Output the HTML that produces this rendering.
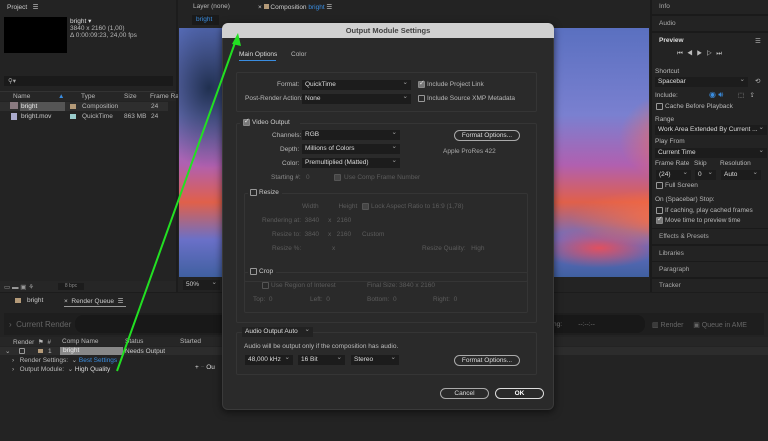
<!DOCTYPE html>
<html><head><meta charset="utf-8"><style>
*{margin:0;padding:0;box-sizing:border-box}
body{width:768px;height:441px;background:#1c1c1c;font-family:"Liberation Sans",sans-serif;font-size:6.5px;color:#b8b8b8;position:relative;overflow:hidden}
.a{position:absolute;white-space:nowrap}
.dd{position:absolute;background:#1c1c1c;color:#ddd;padding-left:3px;line-height:10px;height:10px}
.dd:after{content:"⌄";position:absolute;right:3px;top:-2px;color:#aaa}
.cb{position:absolute;width:7px;height:7px;border:1px solid #999;border-radius:1px}
.cb.on{background:#777;border-color:#888}
.cb.on:after{content:"✓";position:absolute;left:0;top:-3px;font-size:7px;color:#ddd}
.box{position:absolute;border:1px solid #353535;border-radius:2px}
.btn{position:absolute;border:1px solid #aaa;border-radius:6px;text-align:center;color:#ddd;line-height:9px}
.dim{color:#5c5c5c}
.rp{position:absolute;left:652px;width:116px;background:#232323;color:#aaa;padding-left:7px}
</style></head><body>
<!-- project panel -->
<div class="a" style="left:0;top:0;width:176px;height:292px;background:#232323"></div>
<div class="a" style="left:7px;top:3px;color:#ccc">Project &nbsp; ☰</div>
<div class="a" style="left:4px;top:17px;width:63px;height:36px;background:#000"></div>
<div class="a" style="left:70px;top:17px;color:#ddd">bright ▾</div>
<div class="a" style="left:70px;top:25px">3840 x 2160 (1,00)</div>
<div class="a" style="left:70px;top:32px">Δ 0:00:09:23, 24,00 fps</div>
<div class="a" style="left:4px;top:76px;width:169px;height:10px;background:#1a1a1a"></div>
<div class="a" style="left:8px;top:77px;color:#aaa">⚲▾</div>
<div class="a" style="left:0;top:91px;width:176px;height:10px;background:#262626;border-top:1px solid #333"></div>
<div class="a" style="left:13px;top:93px">Name</div><div class="a" style="left:58px;top:93px;color:#3a8de0">▲</div>
<div class="a" style="left:81px;top:93px">Type</div><div class="a" style="left:124px;top:93px">Size</div><div class="a" style="left:150px;top:93px">Frame Ra</div>
<div class="a" style="left:0;top:102px;width:168px;height:9px;background:#2e2e2e"></div>
<div class="a" style="left:20px;top:102px;width:45px;height:9px;background:#555"></div>
<div class="a" style="left:10px;top:102px;width:8px;height:7px;background:#8a7a80"></div>
<div class="a" style="left:21px;top:103px;color:#eee">bright</div>
<div class="a" style="left:70px;top:104px;width:6px;height:5px;background:#b49a78"></div>
<div class="a" style="left:82px;top:103px">Composition</div><div class="a" style="left:151px;top:103px">24</div>
<div class="a" style="left:11px;top:113px;width:6px;height:7px;background:#aac"></div>
<div class="a" style="left:21px;top:113px;color:#ccc">bright.mov</div>
<div class="a" style="left:70px;top:114px;width:6px;height:5px;background:#9cc"></div>
<div class="a" style="left:82px;top:113px">QuickTime</div><div class="a" style="left:124px;top:113px">863 MB</div><div class="a" style="left:151px;top:113px">24</div>
<div class="a" style="left:0;top:281px;width:176px;height:11px;background:#262626"></div>
<div class="a" style="left:4px;top:283px;color:#999">▭ ▬ ▣ ⚘</div>
<div class="a" style="left:58px;top:283px;width:26px;height:7px;background:#1c1c1c;color:#888;font-size:5px;text-align:center">8 bpc</div>
<!-- comp viewer -->
<div class="a" style="left:178px;top:0;width:472px;height:292px;background:#232323"></div>
<div class="a" style="left:193px;top:3px">Layer (none)</div>
<div class="a" style="left:258px;top:3px;color:#ccc">× <span style="display:inline-block;width:5px;height:5px;background:#b49a78"></span> Composition <span style="color:#3a8de0">bright</span> ☰</div>
<div class="a" style="left:192px;top:15px;width:27px;height:10px;background:#1a1a1a;color:#3a8de0;padding-left:4px;line-height:10px">bright</div>
<div class="a" style="left:179px;top:28px;width:470px;height:249px;background:
radial-gradient(ellipse 70px 50px at 510px 110px,#ff6a50,transparent),
radial-gradient(ellipse 110px 30px at 500px 190px,#ff7040,transparent),
radial-gradient(ellipse 60px 20px at 420px 220px,#e05060,transparent),
radial-gradient(ellipse 60px 80px at 30px 60px,#203050,transparent),
linear-gradient(180deg,#5a70c0 0%,#7a80d0 35%,#b060b0 55%,#e0604a 70%,#6a70c8 85%,#4060a0 100%)"></div>
<div class="a" style="left:178px;top:278px;width:472px;height:14px;background:#232323"></div>
<div class="dd" style="left:183px;top:280px;width:37px;color:#ccc">50%</div>
<!-- right panel -->
<div class="a" style="left:650px;top:0;width:118px;height:292px;background:#1a1a1a"></div>
<div class="rp" style="top:0;height:14px;line-height:14px">Info</div>
<div class="rp" style="top:16px;height:15px;line-height:15px">Audio</div>
<div class="rp" style="top:33px;height:195px"></div>
<div class="a" style="left:659px;top:37px;color:#ddd;font-weight:bold">Preview</div><div class="a" style="left:755px;top:37px">☰</div>
<div class="a" style="left:677px;top:50px;color:#bbb;letter-spacing:4px">⏮◀▶▷⏭</div>
<div class="a" style="left:655px;top:68px">Shortcut</div>
<div class="dd" style="left:655px;top:77px;width:93px">Spacebar</div>
<div class="a" style="left:755px;top:77px">⟲</div>
<div class="a" style="left:655px;top:92px">Include:</div>
<div class="a" style="left:709px;top:90px;color:#3a8de0;font-size:8px">◉ 🔊︎</div><div class="a" style="left:738px;top:91px">⬚ &nbsp; ⇪</div>
<div class="cb" style="left:656px;top:103px"></div><div class="a" style="left:665px;top:103px">Cache Before Playback</div>
<div class="a" style="left:655px;top:116px">Range</div>
<div class="dd" style="left:655px;top:125px;width:112px">Work Area Extended By Current ...</div>
<div class="a" style="left:655px;top:138px">Play From</div>
<div class="dd" style="left:655px;top:148px;width:112px">Current Time</div>
<div class="a" style="left:655px;top:160px">Frame Rate</div><div class="a" style="left:694px;top:160px">Skip</div><div class="a" style="left:720px;top:160px">Resolution</div>
<div class="dd" style="left:656px;top:170px;width:35px">(24)</div>
<div class="dd" style="left:695px;top:170px;width:21px">0</div>
<div class="dd" style="left:721px;top:170px;width:40px">Auto</div>
<div class="cb" style="left:656px;top:182px"></div><div class="a" style="left:665px;top:182px">Full Screen</div>
<div class="a" style="left:655px;top:196px">On (Spacebar) Stop:</div>
<div class="cb" style="left:656px;top:207px"></div><div class="a" style="left:665px;top:207px">If caching, play cached frames</div>
<div class="cb on" style="left:656px;top:217px"></div><div class="a" style="left:665px;top:217px">Move time to preview time</div>
<div class="rp" style="top:229px;height:15px;line-height:15px">Effects &amp; Presets</div>
<div class="rp" style="top:246px;height:15px;line-height:15px">Libraries</div>
<div class="rp" style="top:262px;height:15px;line-height:15px">Paragraph</div>
<div class="rp" style="top:279px;height:13px;line-height:13px">Tracker</div>
<!-- bottom -->
<div class="a" style="left:0;top:293px;width:768px;height:148px;background:#232323"></div>
<div class="a" style="left:15px;top:298px;width:6px;height:5px;background:#b49a78"></div>
<div class="a" style="left:27px;top:297px;color:#ccc">bright</div>
<div class="a" style="left:64px;top:297px;color:#ccc">× &nbsp;Render Queue &nbsp;☰</div>
<div class="a" style="left:64px;top:306px;width:62px;height:1px;background:#999"></div>
<div class="a" style="left:4px;top:313px;width:760px;height:22px;background:#1e1e1e"></div>
<div class="a" style="left:9px;top:320px;color:#666;font-size:8px">›&nbsp; Current Render</div>
<div class="a" style="left:75px;top:315px;width:570px;height:18px;background:#181818;border-radius:8px"></div>
<div class="a" style="left:553px;top:321px;color:#777">ng: &nbsp; &nbsp; &nbsp; &nbsp; --:--:--</div>
<div class="a" style="left:652px;top:321px;color:#666;font-size:7px">▥ Render &nbsp; &nbsp; ▣ Queue in AME</div>
<div class="a" style="left:0;top:337px;width:768px;height:9px;background:#262626"></div>
<div class="a" style="left:13px;top:338px">Render &nbsp;⚑ &nbsp;#</div><div class="a" style="left:62px;top:338px">Comp Name</div><div class="a" style="left:125px;top:338px">Status</div><div class="a" style="left:180px;top:338px">Started</div>
<div class="a" style="left:0;top:347px;width:768px;height:8px;background:#2c2c2c"></div>
<div class="a" style="left:5px;top:347px">⌄</div><div class="cb" style="left:19px;top:348px;width:6px;height:6px"></div>
<div class="a" style="left:38px;top:349px;width:5px;height:4px;background:#b49a78"></div><div class="a" style="left:48px;top:348px">1</div>
<div class="a" style="left:60px;top:347px;width:63px;height:8px;background:#888;color:#eee;padding-left:3px">bright</div>
<div class="a" style="left:125px;top:348px;color:#ccc">Needs Output</div>
<div class="a" style="left:12px;top:356px">› &nbsp; Render Settings: &nbsp;⌄ <span style="color:#3a8de0">Best Settings</span></div>
<div class="a" style="left:12px;top:365px">› &nbsp; Output Module: &nbsp;⌄ <span style="color:#ddd">High Quality</span></div>
<div class="a" style="left:195px;top:364px;color:#ddd">+ <span style="color:#555">−</span> Ou</div>
<!-- dialog -->
<div class="a" style="left:222px;top:23px;width:332px;height:387px;background:#2a2a2a;border-radius:6px;border:1px solid #3a3a3a;box-shadow:0 2px 8px rgba(0,0,0,.6)"></div>
<div class="a" style="left:222px;top:23px;width:332px;height:15px;background:#d0d0d0;border-radius:6px 6px 0 0;color:#444;font-weight:bold;font-size:7.5px;text-align:center;line-height:15px">Output Module Settings</div>
<div class="a" style="left:239px;top:51px;color:#ddd">Main Options</div><div class="a" style="left:291px;top:51px">Color</div>
<div class="a" style="left:239px;top:60px;width:37px;height:1px;background:#3a8de0"></div>
<div class="box" style="left:236px;top:72px;width:301px;height:40px"></div>
<div class="a" style="left:277px;top:81px">Format:</div><div class="dd" style="left:302px;top:80px;width:109px">QuickTime</div>
<div class="a" style="left:245px;top:95px">Post-Render Action:</div><div class="dd" style="left:302px;top:94px;width:109px">None</div>
<div class="cb on" style="left:418px;top:81px"></div><div class="a" style="left:427px;top:81px">Include Project Link</div>
<div class="cb" style="left:418px;top:95px"></div><div class="a" style="left:427px;top:95px">Include Source XMP Metadata</div>
<div class="box" style="left:236px;top:123px;width:301px;height:200px"></div>
<div class="a" style="left:240px;top:118px;width:60px;height:9px;background:#2a2a2a"></div>
<div class="cb on" style="left:243px;top:119px"></div><div class="a" style="left:252px;top:119px;color:#ccc">Video Output</div>
<div class="a" style="left:272px;top:132px">Channels:</div><div class="dd" style="left:302px;top:130px;width:98px">RGB</div>
<div class="a" style="left:280px;top:146px">Depth:</div><div class="dd" style="left:302px;top:144px;width:98px">Millions of Colors</div>
<div class="a" style="left:282px;top:160px">Color:</div><div class="dd" style="left:302px;top:158px;width:98px">Premultiplied (Matted)</div>
<div class="a dim" style="left:271px;top:174px;color:#888">Starting #: &nbsp; <span class="dim">0</span></div>
<div class="cb" style="left:334px;top:174px;border-color:#555;background:#444"></div><div class="a dim" style="left:344px;top:174px">Use Comp Frame Number</div>
<div class="btn" style="left:454px;top:130px;width:66px;height:11px">Format Options...</div>
<div class="a" style="left:443px;top:148px;color:#aaa">Apple ProRes 422</div>
<div class="box" style="left:244px;top:193px;width:284px;height:89px"></div>
<div class="a" style="left:248px;top:188px;width:34px;height:9px;background:#2a2a2a"></div>
<div class="cb" style="left:250px;top:189px"></div><div class="a" style="left:259px;top:189px;color:#ccc">Resize</div>
<div class="a dim" style="left:302px;top:203px">Width &nbsp; &nbsp; &nbsp; &nbsp; &nbsp; Height</div>
<div class="cb" style="left:362px;top:203px;border-color:#555;background:#444"></div><div class="a dim" style="left:371px;top:203px">Lock Aspect Ratio to 16:9 (1,78)</div>
<div class="a dim" style="left:262px;top:217px">Rendering at: &nbsp;3840 &nbsp; &nbsp; x &nbsp; 2160</div>
<div class="a dim" style="left:272px;top:231px">Resize to: &nbsp;3840 &nbsp; &nbsp; x &nbsp; 2160 &nbsp; &nbsp; &nbsp;Custom</div>
<div class="a dim" style="left:272px;top:245px">Resize %: &nbsp; &nbsp; &nbsp; &nbsp; &nbsp; &nbsp; &nbsp; &nbsp; x</div>
<div class="a dim" style="left:422px;top:245px">Resize Quality: &nbsp; High</div>
<div class="box" style="left:244px;top:272px;width:284px;height:41px"></div>
<div class="a" style="left:248px;top:267px;width:28px;height:9px;background:#2a2a2a"></div>
<div class="cb" style="left:250px;top:268px"></div><div class="a" style="left:259px;top:268px;color:#ccc">Crop</div>
<div class="cb" style="left:262px;top:282px;border-color:#555"></div><div class="a dim" style="left:271px;top:282px">Use Region of Interest</div>
<div class="a dim" style="left:367px;top:282px">Final Size: 3840 x 2160</div>
<div class="a dim" style="left:253px;top:296px">Top: &nbsp;0</div><div class="a dim" style="left:310px;top:296px">Left: &nbsp;0</div><div class="a dim" style="left:367px;top:296px">Bottom: &nbsp;0</div><div class="a dim" style="left:433px;top:296px">Right: &nbsp;0</div>
<div class="box" style="left:236px;top:332px;width:301px;height:43px"></div>
<div class="dd" style="left:242px;top:327px;width:71px;background:#222;color:#ddd">Audio Output Auto</div>
<div class="a" style="left:244px;top:343px;color:#bbb">Audio will be output only if the composition has audio.</div>
<div class="dd" style="left:245px;top:355px;width:48px">48,000 kHz</div>
<div class="dd" style="left:298px;top:355px;width:47px">16 Bit</div>
<div class="dd" style="left:351px;top:355px;width:48px">Stereo</div>
<div class="btn" style="left:454px;top:355px;width:66px;height:11px">Format Options...</div>
<div class="btn" style="left:440px;top:388px;width:49px;height:11px">Cancel</div>
<div class="btn" style="left:495px;top:388px;width:49px;height:11px;border-color:#ddd;color:#fff;font-weight:bold">OK</div>
<!-- green arrow -->
<svg class="a" style="left:0;top:0" width="768" height="441"><line x1="117" y1="371" x2="236" y2="40" stroke="#22e022" stroke-width="2"/><polygon points="238,33 232,44 241,46" fill="#22e022"/></svg>
</body></html>
